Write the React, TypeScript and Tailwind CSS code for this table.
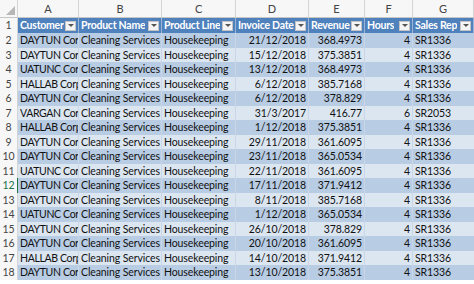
import React from "react";

const rows: [string, string, string, string][] = [
  ["DAYTUN Corp", "21/12/2018", "368.4973", "4"],
  ["DAYTUN Corp", "15/12/2018", "375.3851", "4"],
  ["UATUNC Corp", "13/12/2018", "368.4973", "4"],
  ["HALLAB Corp", "6/12/2018", "385.7168", "4"],
  ["DAYTUN Corp", "6/12/2018", "378.829", "4"],
  ["VARGAN Corp", "31/3/2017", "416.77", "6"],
  ["HALLAB Corp", "1/12/2018", "375.3851", "4"],
  ["DAYTUN Corp", "29/11/2018", "361.6095", "4"],
  ["DAYTUN Corp", "23/11/2018", "365.0534", "4"],
  ["UATUNC Corp", "22/11/2018", "361.6095", "4"],
  ["DAYTUN Corp", "17/11/2018", "371.9412", "4"],
  ["DAYTUN Corp", "8/11/2018", "385.7168", "4"],
  ["UATUNC Corp", "1/12/2018", "365.0534", "4"],
  ["DAYTUN Corp", "26/10/2018", "378.829", "4"],
  ["DAYTUN Corp", "20/10/2018", "361.6095", "4"],
  ["HALLAB Corp", "14/10/2018", "371.9412", "4"],
  ["DAYTUN Corp", "13/10/2018", "375.3851", "4"],
];

const cols = "grid grid-cols-[18px_61px_83px_74px_73px_56px_48px_61px]";
const letters = ["A", "B", "C", "D", "E", "F", "G"];
const heads = ["Customer", "Product Name", "Product Line", "Invoice Date", "Revenue", "Hours", "Sales Rep"];

function Drop() {
  return (
    <span className="flex h-[10px] w-[11px] shrink-0 items-center justify-center border border-[#c4c4c4] bg-[#f4f4f4]">
      <span className="h-0 w-0 border-x-[3px] border-t-[3px] border-x-transparent border-t-[#555]" />
    </span>
  );
}

export default function App() {
  return (
    <div className="h-[284px] w-[474px] overflow-hidden bg-white text-[10.5px] leading-none tracking-[-0.1px] text-[#111]" style={{ fontFamily: "Lato, 'Liberation Sans', sans-serif" }}>
      <div className={`${cols} h-[18px] border-b border-[#c6c6c6] bg-[#f7f7f7] text-[11px] text-[#444]`}>
        <div className="flex items-end justify-end border-r border-[#d4d4d4] p-[2px]">
          <span className="h-0 w-0 border-b-[9px] border-l-[9px] border-b-[#b7b7b7] border-l-transparent" />
        </div>
        {letters.map((l) => (
          <div key={l} className="flex items-center justify-center border-r border-[#d4d4d4]">
            {l}
          </div>
        ))}
      </div>
      <div className={`${cols} h-[15px]`}>
        <div className="flex items-center justify-center border-r border-[#d4d4d4] bg-[#f7f7f7] text-[#444]">1</div>
        {heads.map((h) => (
          <div key={h} className="flex items-center justify-between gap-[1px] overflow-hidden border-r border-[#9bb5d9] bg-[#4f81bd] px-[2px] font-bold tracking-[-0.25px] whitespace-nowrap text-white">
            <span className="overflow-hidden">{h}</span>
            <Drop />
          </div>
        ))}
      </div>
      {rows.map((r, i) => {
        const n = i + 2;
        const bg = n % 2 === 0 ? "bg-[#b8cce4]" : "bg-[#dce6f1]";
        return (
          <div key={n} className={`${cols} h-[14.5px]`}>
            <div className={`flex items-center justify-center border-r bg-[#f7f7f7] ${n === 12 ? "border-[#217346] bg-[#e2e2e2] text-[#217346]" : "border-[#d4d4d4] text-[#444]"}`}>
              {n}
            </div>
            <div className={`flex items-center overflow-hidden border-r border-[#c9d6e8] pl-[2px] tracking-[-0.35px] whitespace-nowrap ${bg}`}>{r[0]}</div>
            <div className={`flex items-center overflow-hidden border-r border-[#c9d6e8] pl-[2px] whitespace-nowrap ${bg}`}>Cleaning Services</div>
            <div className={`flex items-center overflow-hidden border-r border-[#c9d6e8] pl-[2px] whitespace-nowrap ${bg}`}>Housekeeping</div>
            <div className={`flex items-center justify-end border-r border-[#c9d6e8] pr-[2px] ${bg}`}>{r[1]}</div>
            <div className={`flex items-center justify-end border-r border-[#c9d6e8] pr-[2px] ${bg}`}>{r[2]}</div>
            <div className={`flex items-center justify-end border-r border-[#c9d6e8] pr-[2px] ${bg}`}>{r[3]}</div>
            <div className={`flex items-center pl-[2px] ${bg}`}>{r[3] === "6" ? "SR2053" : "SR1336"}</div>
          </div>
        );
      })}
    </div>
  );
}
